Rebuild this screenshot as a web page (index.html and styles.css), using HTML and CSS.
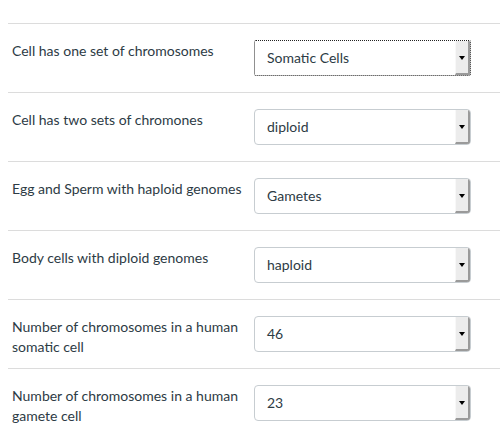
FILE: index.html
```html
<!DOCTYPE html>
<html>
<head>
<meta charset="utf-8">
<link rel="stylesheet" href="styles.css">
</head>
<body>
<div class="list">
  <div class="row">
    <div class="label">Cell has one set of chromosomes</div>
    <div class="select focused"><span class="value">Somatic Cells</span><span class="btn"><span class="arrow"></span></span></div>
  </div>
  <div class="row">
    <div class="label">Cell has two sets of chromones</div>
    <div class="select"><span class="value">diploid</span><span class="btn"><span class="arrow"></span></span></div>
  </div>
  <div class="row">
    <div class="label">Egg and Sperm with haploid genomes</div>
    <div class="select"><span class="value">Gametes</span><span class="btn"><span class="arrow"></span></span></div>
  </div>
  <div class="row">
    <div class="label">Body cells with diploid genomes</div>
    <div class="select"><span class="value">haploid</span><span class="btn"><span class="arrow"></span></span></div>
  </div>
  <div class="row">
    <div class="label">Number of chromosomes in a human somatic cell</div>
    <div class="select"><span class="value">46</span><span class="btn"><span class="arrow"></span></span></div>
  </div>
  <div class="row">
    <div class="label">Number of chromosomes in a human gamete cell</div>
    <div class="select"><span class="value">23</span><span class="btn"><span class="arrow"></span></span></div>
  </div>
</div>
</body>
</html>
```
FILE: styles.css
```css
html, body {
  margin: 0;
  padding: 0;
  background: #fff;
}
body {
  font-family: Lato, "Liberation Sans", sans-serif;
  font-size: 14px;
  color: #2d3b45;
  overflow: hidden;
}
.list {
  margin-left: 8px;
  padding-top: 23px;
}
.row {
  display: flex;
  align-items: flex-start;
  border-top: 1px solid #dcdcdc;
  padding: 16px 0 16px 4px;
  height: 36px;
}
.label {
  width: 234px;
  flex: none;
  line-height: 20px;
  padding-top: 1px;
}
.select {
  flex: none;
  width: 215px;
  height: 34px;
  margin-left: 8px;
  border: 1px solid #c7cdd1;
  border-radius: 4px;
  display: flex;
  align-items: stretch;
  background: #fff;
  overflow: hidden;
}
.select.focused {
  border: 1px dotted #222;
  border-radius: 2px;
}
.value {
  flex: 1;
  padding-left: 12px;
  line-height: 34px;
}
.btn {
  flex: none;
  width: 12px;
  background: #ececec;
  border-left: 1px solid #f8f8f8;
  border-right: 2px solid #9a9a9a;
  border-bottom: 2px solid #9a9a9a;
  display: flex;
  align-items: center;
  justify-content: center;
}
.arrow {
  width: 0;
  height: 0;
  border-left: 3px solid transparent;
  border-right: 3px solid transparent;
  border-top: 4px solid #000;
  margin-top: 2px;
}
```
